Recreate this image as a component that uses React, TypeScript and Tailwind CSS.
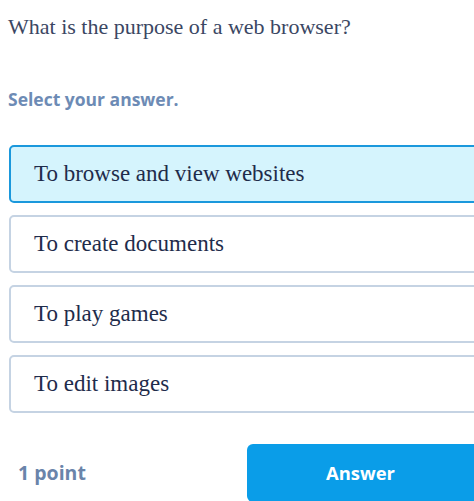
import React from 'react';

const options = [
  { label: 'To browse and view websites', selected: true },
  { label: 'To create documents', selected: false },
  { label: 'To play games', selected: false },
  { label: 'To edit images', selected: false },
];

export default function App() {
  return (
    <main className="h-[501px] w-[474px] overflow-hidden bg-white">
      <h1 className="pl-2 pt-[13px] font-['Liberation_Serif',serif] text-[22px] leading-7 text-[#3b4763]">
        What is the purpose of a web browser?
      </h1>
      <p className="mt-[46px] pl-2 font-['Open_Sans',sans-serif] text-[17.5px] font-bold leading-6 text-[#6d8bb5]">
        Select your answer.
      </p>
      <div className="mt-[34px] -mr-3 ml-[9px] flex flex-col gap-3">
        {options.map((o) => (
          <button
            key={o.label}
            className={
              o.selected
                ? 'flex h-[58px] items-center rounded-[5px] border-2 border-[#1a98dc] bg-[#d5f4fd] pl-[23px] text-left'
                : 'flex h-[58px] items-center rounded-[5px] border-2 border-[#c5d3e3] bg-white pl-[23px] text-left'
            }
          >
            <span className="font-['Liberation_Serif',serif] text-[23px] text-[#1f2c4b]">{o.label}</span>
          </button>
        ))}
      </div>
      <div className="mt-[31px] flex items-center">
        <span className="w-[247px] pl-[18px] font-['Open_Sans',sans-serif] text-[19.5px] font-bold text-[#6a84aa]">
          1 point
        </span>
        <button className="-mr-3 flex h-[58px] flex-1 items-center justify-center rounded-[6px] bg-[#0a9de8] pr-[12px] font-['Open_Sans',sans-serif] text-[18.4px] font-bold text-white">
          Answer
        </button>
      </div>
    </main>
  );
}
